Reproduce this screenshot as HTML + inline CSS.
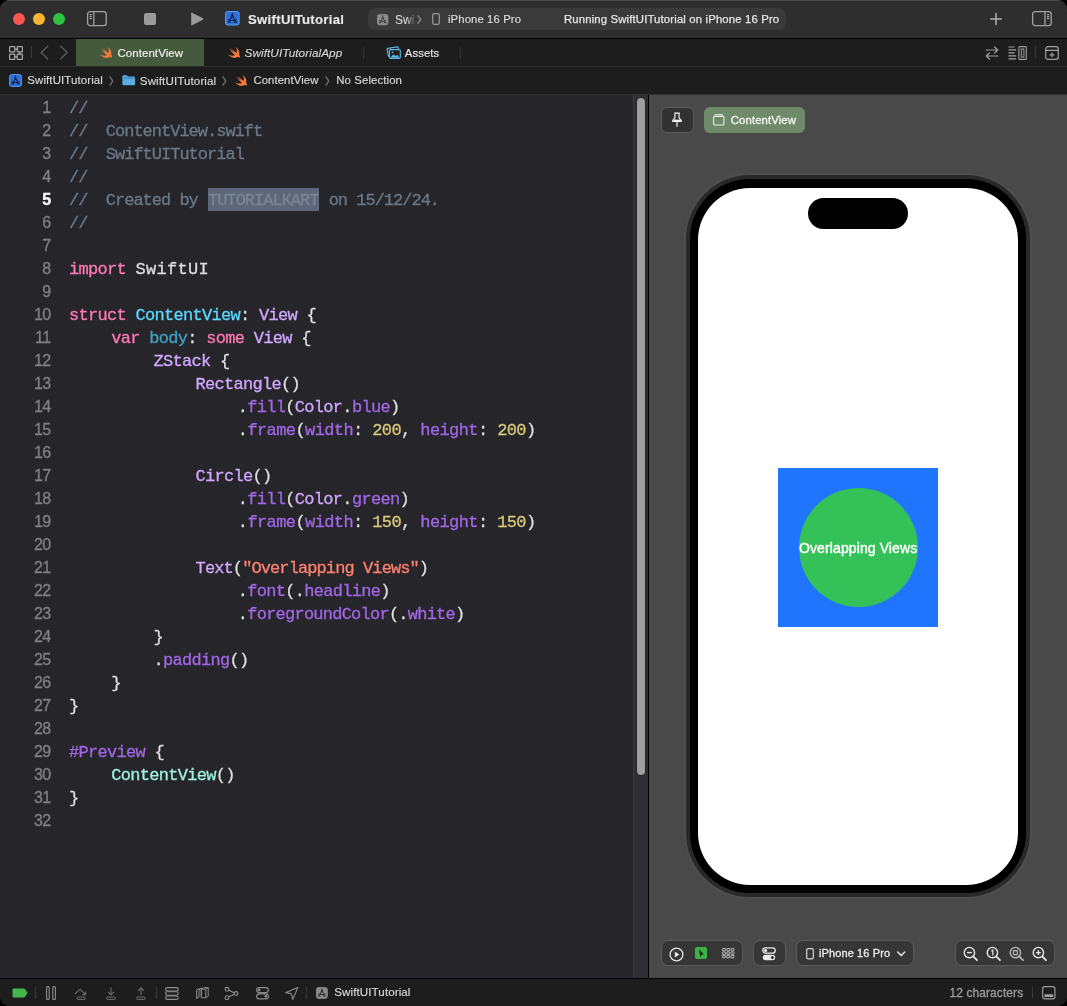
<!DOCTYPE html>
<html><head><meta charset="utf-8"><title>Xcode</title>
<style>
*{box-sizing:border-box}
html,body{margin:0;padding:0}
body{width:1067px;height:1006px;background:#000;overflow:hidden;position:relative;font-family:"Liberation Sans",sans-serif}
.a{position:absolute}
#win{position:absolute;left:0;top:0;width:1067px;height:1006px;border-radius:9.5px;overflow:hidden;background:#1d1d1d;will-change:transform}
.t{position:absolute;white-space:nowrap;line-height:1;-webkit-text-stroke:0.15px currentColor}
svg{position:absolute;overflow:visible}
.ln{position:absolute;left:0;width:51px;text-align:right;font-family:"Liberation Sans",sans-serif;font-size:16px;color:#808084;height:23px;line-height:23px;letter-spacing:-0.6px;-webkit-text-stroke:0.3px currentColor;padding-right:0.5px}
.cur{color:#fff;font-weight:bold}
.cl{position:absolute;height:23px;line-height:23px;font-family:"Liberation Mono",monospace;font-size:17px;letter-spacing:-0.7px;color:#dfdfe0;white-space:pre;-webkit-text-stroke:0.3px currentColor}
.k{color:#ff7ab2}
.c{color:#6c7986;letter-spacing:-1.0px}
.td{color:#5dd8ff}
.od{color:#41a1c0}
.ty{color:#d0a8ff}
.fn{color:#a167e6}
.nu{color:#d9c97c}
.st{color:#ff8170}
.pj{color:#9ef1dd}
.sel{background:#5d6779;display:inline-block;height:22px;line-height:23px;vertical-align:top;box-shadow:0 -1px 0 #5d6779;margin-left:1px;padding-right:1px;color:#7a8593}
</style></head>
<body>
<div id="win">
<div class="a" style="left:0px;top:0px;width:1067px;height:38px;background:#2e2e2e;"></div>
<div class="a" style="left:0px;top:0px;width:1067px;height:1px;background:#4a4a4a;"></div>
<div class="a" style="left:0px;top:38px;width:1067px;height:1px;background:#000;"></div>
<div class="a" style="left:0px;top:39px;width:1067px;height:27px;background:#1d1d1d;"></div>
<div class="a" style="left:0px;top:66px;width:1067px;height:1px;background:#2e2e2e;"></div>
<div class="a" style="left:0px;top:67px;width:1067px;height:27px;background:#1d1d1d;"></div>
<div class="a" style="left:0px;top:94px;width:1067px;height:1px;background:#333333;"></div>
<div class="a" style="left:12.8px;top:12.7px;width:12.4px;height:12.4px;border-radius:50%;background:#fb5650"></div>
<div class="a" style="left:32.8px;top:12.7px;width:12.4px;height:12.4px;border-radius:50%;background:#fdb42f"></div>
<div class="a" style="left:52.8px;top:12.7px;width:12.4px;height:12.4px;border-radius:50%;background:#2bc33f"></div>
<svg style="left:86px;top:10px;" width="22" height="17" viewBox="0 0 22 17"><rect x="1.6" y="1.6" width="18.6" height="14" rx="2.6" fill="none" stroke="#a2a2a2" stroke-width="1.3"/><line x1="7.8" y1="1.6" x2="7.8" y2="15.6" stroke="#a2a2a2" stroke-width="1.3"/><path d="M3.6 4.6 H5.8 M3.6 6.6 H5.8 M3.6 8.6 H5.8" stroke="#a2a2a2" stroke-width="1.1"/></svg>
<div class="a" style="left:144px;top:13px;width:12px;height:12px;background:#9b9b9b;border-radius:2px"></div>
<svg style="left:190px;top:12px;" width="14" height="14" viewBox="0 0 14 14"><path d="M1.2 1.2 Q1 0.2 2 0.7 L13 6.3 Q13.8 7 13 7.7 L2 13.3 Q1 13.8 1.2 12.8 Z" fill="#9b9b9b"/></svg>
<svg style="left:225px;top:11.2px;" width="14.6" height="14.6" viewBox="0 0 14 14"><rect x="0.5" y="0.5" width="13" height="13" rx="2.6" fill="#2f6fd8" stroke="#5b95f0" stroke-width="1"/><path d="M7 2.3 V4.4 M7 4.2 L3.9 10.4 M7 4.2 L10.1 10.4 M3.2 8.4 Q7 9.8 10.8 8.4 M3 10.6 H4.8 M9.2 10.6 H11" stroke="#10213f" stroke-width="1.15" fill="none" stroke-linecap="round"/><circle cx="7" cy="4.4" r="1.1" fill="#10213f"/></svg>
<div class="t" style="left:248.0px;top:12.6px;font-size:13.15px;letter-spacing:0.30px;color:#e8e8e8;font-weight:bold;font-style:normal;">SwiftUITutorial</div>
<div class="a" style="left:368px;top:8px;width:418px;height:22px;background:#3a3a3a;border-radius:7px"></div>
<svg style="left:377px;top:13.5px;" width="11.4" height="11.4" viewBox="0 0 14 14"><rect x="0.5" y="0.5" width="13" height="13" rx="2.6" fill="#8b8b8b" stroke="#8b8b8b" stroke-width="1"/><path d="M7 2.3 V4.4 M7 4.2 L3.9 10.4 M7 4.2 L10.1 10.4 M3.2 8.4 Q7 9.8 10.8 8.4 M3 10.6 H4.8 M9.2 10.6 H11" stroke="#3a3a3a" stroke-width="1.15" fill="none" stroke-linecap="round"/><circle cx="7" cy="4.4" r="1.1" fill="#3a3a3a"/></svg>
<div class="t" style="left:395px;top:13.5px;font-size:12px;color:#d6d6d6;-webkit-mask-image:linear-gradient(90deg,#000 60%,transparent 110%)">Swi</div>
<svg style="left:416.5px;top:14.5px;" width="5" height="9" viewBox="0 0 5 9"><path d="M1 0.8 L3.8 4.5 L1 8.2" stroke="#8a8a8a" stroke-width="1.4" fill="none" stroke-linecap="round"/></svg>
<svg style="left:431.5px;top:13.3px;" width="8" height="12" viewBox="0 0 8 12"><rect x="0.7" y="0.7" width="6.6" height="10.6" rx="1.5" fill="none" stroke="#9a9a9a" stroke-width="1.2"/></svg>
<div class="t" style="left:448.0px;top:13.8px;font-size:11.34px;letter-spacing:0.10px;color:#dedede;font-weight:normal;font-style:normal;">iPhone 16 Pro</div>
<div class="t" style="left:564.0px;top:13.8px;font-size:11.34px;letter-spacing:0.15px;color:#e6e6e6;font-weight:normal;font-style:normal;-webkit-text-stroke:0.25px #e6e6e6">Running SwiftUITutorial on iPhone 16 Pro</div>
<svg style="left:990px;top:13.3px;" width="12" height="12" viewBox="0 0 12 12"><path d="M6 0.6 V11.4 M0.6 6 H11.4" stroke="#b0b0b0" stroke-width="1.5" stroke-linecap="round"/></svg>
<svg style="left:1031px;top:10px;" width="22" height="17" viewBox="0 0 22 17"><rect x="1.6" y="1.6" width="18.6" height="14" rx="2.6" fill="none" stroke="#a2a2a2" stroke-width="1.3"/><line x1="14" y1="1.6" x2="14" y2="15.6" stroke="#a2a2a2" stroke-width="1.3"/><path d="M16 4.6 H18.2 M16 6.6 H18.2 M16 8.6 H18.2" stroke="#a2a2a2" stroke-width="1.1"/></svg>
<svg style="left:8.5px;top:45.5px;" width="14" height="14" viewBox="0 0 14 14"><g fill="none" stroke="#a9a9a9" stroke-width="1.2"><rect x="0.6" y="0.6" width="5.2" height="5.2" rx="0.6"/><rect x="8.2" y="0.6" width="5.2" height="5.2" rx="0.6"/><rect x="0.6" y="8.2" width="5.2" height="5.2" rx="0.6"/><rect x="8.2" y="8.2" width="5.2" height="5.2" rx="0.6"/><path d="M5.8 3.2 H9.4 M10.8 5.8 V9.2 M8.2 10.8 H4.8"/></g></svg>
<div class="a" style="left:31px;top:46px;width:1px;height:12px;background:#3a3a3a;"></div>
<svg style="left:39.5px;top:45px;" width="10" height="15" viewBox="0 0 10 15"><path d="M8.2 0.8 L1.2 7.5 L8.2 14.2" stroke="#5c5c5c" stroke-width="1.3" fill="none"/></svg>
<svg style="left:58.8px;top:45px;" width="10" height="15" viewBox="0 0 10 15"><path d="M1.2 0.8 L8.2 7.5 L1.2 14.2" stroke="#5c5c5c" stroke-width="1.3" fill="none"/></svg>
<div class="a" style="left:76px;top:39px;width:128px;height:27px;background:#455a3d;"></div>
<svg style="left:99.9px;top:46.9px;overflow:visible" width="12.199999999999989" height="11.100000000000001" viewBox="2.411 3.409 18.116999999999997 16.213"><path fill="#f5793a" d="M13.543 3.41c4.114 2.47 6.545 7.162 5.549 11.131-.024.093-.05.181-.076.272l.002.001c2.062 2.538 1.5 5.258 1.236 4.745-1.072-2.086-3.066-1.568-4.088-1.043a6.803 6.803 0 0 1-.281.158l-.02.012-.002.002c-2.115 1.123-4.957 1.205-7.812-.022a12.568 12.568 0 0 1-5.64-4.838c.649.48 1.35.902 2.097 1.252 3.019 1.414 6.051 1.311 8.197-.002C9.651 12.73 7.101 9.67 5.146 7.191a10.628 10.628 0 0 1-1.005-1.384c2.34 2.142 6.038 4.83 7.365 5.576C8.69 8.408 6.208 4.743 6.324 4.86c4.436 4.47 8.528 6.996 8.528 6.996.154.085.27.154.36.213.085-.215.16-.437.224-.668.708-2.588-.09-5.548-1.893-7.992z"/></svg>
<div class="t" style="left:117.4px;top:47.8px;font-size:11.45px;letter-spacing:0.10px;color:#f2f2f2;font-weight:normal;font-style:normal;">ContentView</div>
<svg style="left:228.3px;top:46.9px;overflow:visible" width="12.199999999999989" height="11.100000000000001" viewBox="2.411 3.409 18.116999999999997 16.213"><path fill="#f5793a" d="M13.543 3.41c4.114 2.47 6.545 7.162 5.549 11.131-.024.093-.05.181-.076.272l.002.001c2.062 2.538 1.5 5.258 1.236 4.745-1.072-2.086-3.066-1.568-4.088-1.043a6.803 6.803 0 0 1-.281.158l-.02.012-.002.002c-2.115 1.123-4.957 1.205-7.812-.022a12.568 12.568 0 0 1-5.64-4.838c.649.48 1.35.902 2.097 1.252 3.019 1.414 6.051 1.311 8.197-.002C9.651 12.73 7.101 9.67 5.146 7.191a10.628 10.628 0 0 1-1.005-1.384c2.34 2.142 6.038 4.83 7.365 5.576C8.69 8.408 6.208 4.743 6.324 4.86c4.436 4.47 8.528 6.996 8.528 6.996.154.085.27.154.36.213.085-.215.16-.437.224-.668.708-2.588-.09-5.548-1.893-7.992z"/></svg>
<div class="t" style="left:244.5px;top:47.7px;font-size:11.82px;letter-spacing:0.05px;color:#d4d4d4;font-weight:normal;font-style:italic;">SwiftUITutorialApp</div>
<div class="a" style="left:363px;top:47px;width:1px;height:12px;background:#343434;"></div>
<svg style="left:385.5px;top:46.2px;" width="15" height="13" viewBox="0 0 16 14"><path d="M2.6 11.5 L1.2 3.8 Q1 2.8 2 2.6 L11.8 0.9 Q12.8 0.8 13 1.8 L13.3 3.3" fill="none" stroke="#5bb3e6" stroke-width="1.3"/><rect x="3.7" y="3.9" width="11.6" height="9.4" rx="1.2" fill="none" stroke="#5bb3e6" stroke-width="1.3"/><path d="M4.4 12.6 L8 9 L10.3 10.8 L12 9.3 L14.6 12.6 Z" fill="#5bb3e6"/><circle cx="7" cy="6.8" r="1" fill="#5bb3e6"/></svg>
<div class="t" style="left:404.8px;top:47.9px;font-size:11.3px;letter-spacing:0.10px;color:#e8e8e8;font-weight:normal;font-style:normal;">Assets</div>
<div class="a" style="left:460px;top:47px;width:1px;height:12px;background:#343434;"></div>
<svg style="left:984.5px;top:45.5px;" width="14" height="14" viewBox="0 0 14 14"><path d="M1 4 H12.6 M9.6 1 L12.8 4 L9.6 7 M13 10 H1.4 M4.4 7 L1.2 10 L4.4 13" stroke="#a0a0a0" stroke-width="1.2" fill="none" stroke-linecap="round" stroke-linejoin="round"/></svg>
<svg style="left:1007.5px;top:45.5px;" width="19" height="14" viewBox="0 0 19 14"><path d="M0.5 1 H6.5 M0.5 3.9 H8.2 M0.5 6.9 H6.5 M0.5 9.9 H8.2 M0.5 12.9 H8.2" stroke="#a0a0a0" stroke-width="1.1"/><rect x="10.9" y="0.6" width="7.4" height="12.8" rx="0.6" fill="none" stroke="#a0a0a0" stroke-width="1.1"/><rect x="13.3" y="3" width="2.6" height="8" fill="none" stroke="#a0a0a0" stroke-width="1"/></svg>
<div class="a" style="left:1035px;top:46px;width:1px;height:12px;background:#3a3a3a;"></div>
<svg style="left:1044.5px;top:45.5px;" width="14" height="14" viewBox="0 0 14 14"><rect x="0.7" y="0.7" width="12.6" height="12.6" rx="2.4" fill="none" stroke="#a0a0a0" stroke-width="1.2"/><path d="M0.7 4.4 H13.3 M7 6.4 V11.2 M4.6 8.8 H9.4" stroke="#a0a0a0" stroke-width="1.2"/></svg>
<svg style="left:9px;top:73.8px;" width="13" height="13" viewBox="0 0 14 14"><rect x="0.5" y="0.5" width="13" height="13" rx="2.6" fill="#2f6fd8" stroke="#5b95f0" stroke-width="1"/><path d="M7 2.3 V4.4 M7 4.2 L3.9 10.4 M7 4.2 L10.1 10.4 M3.2 8.4 Q7 9.8 10.8 8.4 M3 10.6 H4.8 M9.2 10.6 H11" stroke="#10213f" stroke-width="1.15" fill="none" stroke-linecap="round"/><circle cx="7" cy="4.4" r="1.1" fill="#10213f"/></svg>
<div class="t" style="left:27.3px;top:75.0px;font-size:11.48px;letter-spacing:0.10px;color:#d9d9d9;font-weight:normal;font-style:normal;">SwiftUITutorial</div>
<svg style="left:108.5px;top:75.8px;" width="5" height="10" viewBox="0 0 5 10"><path d="M1 0.8 L3.8 5.0 L1 9.2" stroke="#6c6c6c" stroke-width="1.4" fill="none" stroke-linecap="round"/></svg>
<svg style="left:121.5px;top:75px;" width="13.5" height="10.5" viewBox="0 0 13.5 10.5"><path d="M0.4 1.4 Q0.4 0.3 1.5 0.3 H4.6 L6 1.6 H12 Q13.1 1.6 13.1 2.7 V9.2 Q13.1 10.3 12 10.3 H1.5 Q0.4 10.3 0.4 9.2 Z" fill="#5aaee4"/><path d="M0.4 3 H13.1" stroke="#2c6b95" stroke-width="0.7"/></svg>
<div class="t" style="left:139.8px;top:75.0px;font-size:11.6px;letter-spacing:0.10px;color:#d9d9d9;font-weight:normal;font-style:normal;">SwiftUITutorial</div>
<svg style="left:222px;top:75.8px;" width="5" height="10" viewBox="0 0 5 10"><path d="M1 0.8 L3.8 5.0 L1 9.2" stroke="#6c6c6c" stroke-width="1.4" fill="none" stroke-linecap="round"/></svg>
<svg style="left:235.3px;top:74.6px;overflow:visible" width="12.199999999999989" height="11.0" viewBox="2.411 3.409 18.116999999999997 16.213"><path fill="#f5793a" d="M13.543 3.41c4.114 2.47 6.545 7.162 5.549 11.131-.024.093-.05.181-.076.272l.002.001c2.062 2.538 1.5 5.258 1.236 4.745-1.072-2.086-3.066-1.568-4.088-1.043a6.803 6.803 0 0 1-.281.158l-.02.012-.002.002c-2.115 1.123-4.957 1.205-7.812-.022a12.568 12.568 0 0 1-5.64-4.838c.649.48 1.35.902 2.097 1.252 3.019 1.414 6.051 1.311 8.197-.002C9.651 12.73 7.101 9.67 5.146 7.191a10.628 10.628 0 0 1-1.005-1.384c2.34 2.142 6.038 4.83 7.365 5.576C8.69 8.408 6.208 4.743 6.324 4.86c4.436 4.47 8.528 6.996 8.528 6.996.154.085.27.154.36.213.085-.215.16-.437.224-.668.708-2.588-.09-5.548-1.893-7.992z"/></svg>
<div class="t" style="left:253.4px;top:75.1px;font-size:11.34px;letter-spacing:0.10px;color:#d9d9d9;font-weight:normal;font-style:normal;">ContentView</div>
<svg style="left:324.5px;top:75.8px;" width="5" height="10" viewBox="0 0 5 10"><path d="M1 0.8 L3.8 5.0 L1 9.2" stroke="#6c6c6c" stroke-width="1.4" fill="none" stroke-linecap="round"/></svg>
<div class="t" style="left:336.3px;top:75.1px;font-size:11.38px;letter-spacing:0.10px;color:#d9d9d9;font-weight:normal;font-style:normal;">No Selection</div>
<div class="a" style="left:0px;top:95px;width:633px;height:883px;background:#25252a;"></div>
<div class="ln" style="top:95.5px">1</div>
<div class="cl" style="top:97.0px;left:69.0px"><span class="c">//</span></div>
<div class="ln" style="top:118.5px">2</div>
<div class="cl" style="top:120.0px;left:69.0px"><span class="c">//  ContentView.swift</span></div>
<div class="ln" style="top:141.5px">3</div>
<div class="cl" style="top:143.0px;left:69.0px"><span class="c">//  SwiftUITutorial</span></div>
<div class="ln" style="top:164.5px">4</div>
<div class="cl" style="top:166.0px;left:69.0px"><span class="c">//</span></div>
<div class="ln cur" style="top:187.5px">5</div>
<div class="cl" style="top:189.0px;left:69.0px"><span class="c">//  Created by <span class="sel">TUTORIALKART</span> on 15/12/24.</span></div>
<div class="ln" style="top:210.5px">6</div>
<div class="cl" style="top:212.0px;left:69.0px"><span class="c">//</span></div>
<div class="ln" style="top:233.5px">7</div>
<div class="ln" style="top:256.5px">8</div>
<div class="cl" style="top:258.0px;left:69.0px;letter-spacing:-0.7px"><span class="k">import</span> <span style="letter-spacing:0.3px">SwiftUI</span></div>
<div class="ln" style="top:279.5px">9</div>
<div class="ln" style="top:302.5px">10</div>
<div class="cl" style="top:304.0px;left:69.0px"><span class="k">struct</span> <span class="td">ContentView</span>: <span class="ty">View</span> {</div>
<div class="ln" style="top:325.5px">11</div>
<div class="cl" style="top:327.0px;left:111.2px"><span class="k">var</span> <span class="od">body</span>: <span class="k">some</span> <span class="ty">View</span> {</div>
<div class="ln" style="top:348.5px">12</div>
<div class="cl" style="top:350.0px;left:153.4px"><span class="ty">ZStack</span> {</div>
<div class="ln" style="top:371.5px">13</div>
<div class="cl" style="top:373.0px;left:195.6px"><span class="ty">Rectangle</span>()</div>
<div class="ln" style="top:394.5px">14</div>
<div class="cl" style="top:396.0px;left:237.8px">.<span class="fn">fill</span>(<span class="ty">Color</span>.<span class="fn">blue</span>)</div>
<div class="ln" style="top:417.5px">15</div>
<div class="cl" style="top:419.0px;left:237.8px;letter-spacing:-0.6px">.<span class="fn">frame</span>(<span class="fn">width</span>: <span class="nu">200</span>, <span class="fn">height</span>: <span class="nu">200</span>)</div>
<div class="ln" style="top:440.5px">16</div>
<div class="ln" style="top:463.5px">17</div>
<div class="cl" style="top:465.0px;left:195.6px"><span class="ty">Circle</span>()</div>
<div class="ln" style="top:486.5px">18</div>
<div class="cl" style="top:488.0px;left:237.8px">.<span class="fn">fill</span>(<span class="ty">Color</span>.<span class="fn">green</span>)</div>
<div class="ln" style="top:509.5px">19</div>
<div class="cl" style="top:511.0px;left:237.8px;letter-spacing:-0.6px">.<span class="fn">frame</span>(<span class="fn">width</span>: <span class="nu">150</span>, <span class="fn">height</span>: <span class="nu">150</span>)</div>
<div class="ln" style="top:532.5px">20</div>
<div class="ln" style="top:555.5px">21</div>
<div class="cl" style="top:557.0px;left:195.6px;letter-spacing:-0.9px"><span class="ty">Text</span>(<span class="st">"Overlapping Views"</span>)</div>
<div class="ln" style="top:578.5px">22</div>
<div class="cl" style="top:580.0px;left:237.8px">.<span class="fn">font</span>(.<span class="fn">headline</span>)</div>
<div class="ln" style="top:601.5px">23</div>
<div class="cl" style="top:603.0px;left:237.8px;letter-spacing:-0.76px">.<span class="fn">foregroundColor</span>(.<span class="fn">white</span>)</div>
<div class="ln" style="top:624.5px">24</div>
<div class="cl" style="top:626.0px;left:153.4px">}</div>
<div class="ln" style="top:647.5px">25</div>
<div class="cl" style="top:649.0px;left:153.4px">.<span class="fn">padding</span>()</div>
<div class="ln" style="top:670.5px">26</div>
<div class="cl" style="top:672.0px;left:111.2px">}</div>
<div class="ln" style="top:693.5px">27</div>
<div class="cl" style="top:695.0px;left:69.0px">}</div>
<div class="ln" style="top:716.5px">28</div>
<div class="ln" style="top:739.5px">29</div>
<div class="cl" style="top:741.0px;left:69.0px"><span class="fn">#Preview</span> {</div>
<div class="ln" style="top:762.5px">30</div>
<div class="cl" style="top:764.0px;left:111.2px"><span class="pj">ContentView</span>()</div>
<div class="ln" style="top:785.5px">31</div>
<div class="cl" style="top:787.0px;left:69.0px">}</div>
<div class="ln" style="top:808.5px">32</div>
<div class="a" style="left:633px;top:95px;width:1px;height:883px;background:#3a3a3f;"></div>
<div class="a" style="left:634px;top:95px;width:14px;height:883px;background:#2e2e33;"></div>
<div class="a" style="left:637px;top:98px;width:8px;height:677px;background:#9e9e9e;border-radius:4px;box-shadow:0 0 0 0.5px rgba(0,0,0,.35)"></div>
<div class="a" style="left:648px;top:95px;width:1px;height:883px;background:#000;"></div>
<div class="a" style="left:649px;top:95px;width:418px;height:883px;background:#494949;"></div>
<div class="a" style="left:661px;top:107px;width:33px;height:26px;background:#323232;border-radius:6px;border:1px solid #5a5a5a"></div>
<svg style="left:671px;top:112px;" width="12" height="16" viewBox="0 0 12 16"><path d="M3.2 1.2 H8.8 M4 1.2 V5 Q4 6.2 2.4 7.6 Q1.4 8.6 1.6 9.4 H10.4 Q10.6 8.6 9.6 7.6 Q8 6.2 8 5 V1.2" fill="none" stroke="#f0f0f0" stroke-width="1.2" stroke-linejoin="round"/><path d="M2.3 8.4 H9.7" stroke="#f0f0f0" stroke-width="1.6"/><path d="M6 9.6 V14.8" stroke="#f0f0f0" stroke-width="1.2"/></svg>
<div class="a" style="left:704px;top:107px;width:101px;height:26px;background:#6e8a68;border-radius:6px"></div>
<svg style="left:712.5px;top:113px;" width="11.5" height="12.5" viewBox="0 0 12 13"><rect x="0.6" y="3.6" width="10.8" height="8.8" rx="1" fill="none" stroke="#eef2ec" stroke-width="1.1"/><path d="M1.8 1.6 H10.2" stroke="#eef2ec" stroke-width="1.1" opacity=".8"/><path d="M1 3.4 H11" stroke="#eef2ec" stroke-width="1.4"/></svg>
<div class="t" style="left:730.8px;top:114.8px;font-size:11.34px;letter-spacing:0.10px;color:#f6f8f5;font-weight:normal;font-style:normal;-webkit-text-stroke:0.3px #f6f8f5">ContentView</div>
<div class="a" style="left:684.2px;top:173.3px;width:347.8px;height:725.5px;border-radius:66px;background:#4e4e4e"></div>
<div class="a" style="left:686px;top:175px;width:344px;height:722px;border-radius:64px;background:#292929"></div>
<div class="a" style="left:690px;top:179.3px;width:335.6px;height:713.3px;border-radius:60px;background:#000"></div>
<div class="a" style="left:698px;top:187.5px;width:320px;height:697.5px;border-radius:52px;background:#fff"></div>
<div class="a" style="left:808px;top:198px;width:100px;height:31px;border-radius:15.5px;background:#000"></div>
<div class="a" style="left:778.3px;top:467.9px;width:159.4px;height:159.4px;background:#1f75fe;"></div>
<div class="a" style="left:798.5px;top:487.7px;width:119.5px;height:119.5px;border-radius:50%;background:#34c158"></div>
<div class="t" style="left:799.0px;top:541.3px;font-size:14.02px;letter-spacing:0.10px;color:#ffffff;font-weight:normal;font-style:normal;-webkit-text-stroke:0.4px #fff">Overlapping Views</div>
<div class="a" style="left:661.3px;top:940px;width:81.70000000000005px;height:26px;background:#363636;border-radius:7px;border:1px solid #5c5c5c"></div>
<svg style="left:669px;top:946.5px;" width="15" height="15" viewBox="0 0 15 15"><circle cx="7.5" cy="7.5" r="6.4" fill="none" stroke="#e8e8e8" stroke-width="1.3"/><path d="M5.8 4.6 L10.4 7.5 L5.8 10.4 Z" fill="#e8e8e8"/></svg>
<div class="a" style="left:695px;top:947.2px;width:12px;height:12px;background:#3eb049;border-radius:2px"></div>
<svg style="left:697.5px;top:949px;" width="7" height="9" viewBox="0 0 7 9"><path d="M1 0.6 L6.2 5.6 L3.8 5.6 L2.4 8.4 Z" fill="#0f2c11"/></svg>
<svg style="left:722px;top:948px;" width="12.5" height="10.5" viewBox="0 0 12.5 10.5"><rect x="0.45" y="0.45" width="2.9" height="2.4" rx="0.4" fill="none" stroke="#d0d0d0" stroke-width="0.85"/><rect x="4.75" y="0.45" width="2.9" height="2.4" rx="0.4" fill="none" stroke="#d0d0d0" stroke-width="0.85"/><rect x="9.049999999999999" y="0.45" width="2.9" height="2.4" rx="0.4" fill="none" stroke="#d0d0d0" stroke-width="0.85"/><rect x="0.45" y="3.95" width="2.9" height="2.4" rx="0.4" fill="none" stroke="#d0d0d0" stroke-width="0.85"/><rect x="4.75" y="3.95" width="2.9" height="2.4" rx="0.4" fill="none" stroke="#d0d0d0" stroke-width="0.85"/><rect x="9.049999999999999" y="3.95" width="2.9" height="2.4" rx="0.4" fill="none" stroke="#d0d0d0" stroke-width="0.85"/><rect x="0.45" y="7.45" width="2.9" height="2.4" rx="0.4" fill="none" stroke="#d0d0d0" stroke-width="0.85"/><rect x="4.75" y="7.45" width="2.9" height="2.4" rx="0.4" fill="none" stroke="#d0d0d0" stroke-width="0.85"/><rect x="9.049999999999999" y="7.45" width="2.9" height="2.4" rx="0.4" fill="none" stroke="#d0d0d0" stroke-width="0.85"/></svg>
<div class="a" style="left:753px;top:940px;width:33px;height:26px;background:#363636;border-radius:7px;border:1px solid #5c5c5c"></div>
<svg style="left:762px;top:946.5px;" width="14" height="14" viewBox="0 0 14 14"><rect x="0.8" y="0.8" width="12.4" height="5.4" rx="2.7" fill="none" stroke="#eaeaea" stroke-width="1.3"/><circle cx="3.6" cy="3.5" r="1.6" fill="#eaeaea"/><rect x="0.8" y="7.8" width="12.4" height="5.4" rx="2.7" fill="#eaeaea"/><circle cx="10.4" cy="10.5" r="1.6" fill="#343434"/></svg>
<div class="a" style="left:796.2px;top:940px;width:117.39999999999998px;height:26px;background:#363636;border-radius:7px;border:1px solid #5c5c5c"></div>
<svg style="left:805.5px;top:947.5px;" width="8" height="11.5" viewBox="0 0 8 11.5"><rect x="0.7" y="0.7" width="6.6" height="10.1" rx="1.4" fill="none" stroke="#d8d8d8" stroke-width="1.2"/></svg>
<div class="t" style="left:819.0px;top:948.2px;font-size:11.04px;letter-spacing:0.10px;color:#ececec;font-weight:normal;font-style:normal;-webkit-text-stroke:0.3px #ececec">iPhone 16 Pro</div>
<svg style="left:896.5px;top:950.5px;" width="8.5" height="6" viewBox="0 0 8.5 6"><path d="M0.8 1 L4.25 4.6 L7.7 1" stroke="#e4e4e4" stroke-width="1.5" fill="none" stroke-linecap="round" stroke-linejoin="round"/></svg>
<div class="a" style="left:955.3px;top:940px;width:99.70000000000005px;height:26px;background:#363636;border-radius:7px;border:1px solid #5c5c5c"></div>
<svg style="left:962.5px;top:945.5px;" width="16" height="16" viewBox="0 0 16 16"><circle cx="6.4" cy="6.6" r="5.2" fill="none" stroke="#e6e6e6" stroke-width="1.4"/><path d="M10.2 10.4 L14 14.2" stroke="#e6e6e6" stroke-width="1.8" stroke-linecap="round"/><path d="M4 6.6 H8.8" stroke="#e6e6e6" stroke-width="1.4"/></svg>
<svg style="left:985.5px;top:945.5px;" width="16" height="16" viewBox="0 0 16 16"><circle cx="6.4" cy="6.6" r="5.2" fill="none" stroke="#e6e6e6" stroke-width="1.4"/><path d="M10.2 10.4 L14 14.2" stroke="#e6e6e6" stroke-width="1.8" stroke-linecap="round"/><path d="M5.4 5.2 L6.8 4 V9.4" stroke="#e6e6e6" stroke-width="1.2" fill="none"/></svg>
<svg style="left:1008.5px;top:945.5px;" width="16" height="16" viewBox="0 0 16 16"><circle cx="6.4" cy="6.6" r="5.2" fill="none" stroke="#b5b5b5" stroke-width="1.4"/><path d="M10.2 10.4 L14 14.2" stroke="#b5b5b5" stroke-width="1.8" stroke-linecap="round"/><rect x="4.4" y="4.6" width="4" height="4" rx="0.6" fill="none" stroke="#bdbdbd" stroke-width="1.1"/></svg>
<svg style="left:1031.5px;top:945.5px;" width="16" height="16" viewBox="0 0 16 16"><circle cx="6.4" cy="6.6" r="5.2" fill="none" stroke="#e6e6e6" stroke-width="1.4"/><path d="M10.2 10.4 L14 14.2" stroke="#e6e6e6" stroke-width="1.8" stroke-linecap="round"/><path d="M4 6.6 H8.8 M6.4 4.2 V9" stroke="#e6e6e6" stroke-width="1.4"/></svg>
<div class="a" style="left:0px;top:978px;width:1067px;height:1px;background:#000;"></div>
<div class="a" style="left:0px;top:979px;width:1067px;height:27px;background:#1d1d1d;"></div>
<div class="a" style="left:0;top:0.8px;width:1067px;height:1006px">
<svg style="left:11.5px;top:987.5px;" width="16" height="10" viewBox="0 0 16 10"><path d="M1.5 0.5 H11.6 Q12.3 0.5 12.8 1 L15.3 4.4 Q15.7 5 15.3 5.6 L12.8 9 Q12.3 9.5 11.6 9.5 H1.5 Q0.5 9.5 0.5 8.5 V1.5 Q0.5 0.5 1.5 0.5 Z" fill="#44b84b"/></svg>
<div class="a" style="left:34.5px;top:986px;width:1px;height:12px;background:#3a3a3a;"></div>
<svg style="left:45.5px;top:985.5px;" width="10" height="14" viewBox="0 0 10 14"><rect x="0.6" y="0.6" width="2.6" height="12.8" rx="1" fill="none" stroke="#8f8f8f" stroke-width="1.1"/><rect x="6.8" y="0.6" width="2.6" height="12.8" rx="1" fill="none" stroke="#8f8f8f" stroke-width="1.1"/></svg>
<svg style="left:73.5px;top:986px;" width="14" height="13" viewBox="0 0 14 13"><g opacity=".7"><path d="M1 7 L6 2.2 L11.6 7.6 M11.6 4.4 V7.6 H8.4" fill="none" stroke="#8f8f8f" stroke-width="1.1"/><rect x="3.2" y="10" width="8" height="2.4" rx="0.5" fill="none" stroke="#8f8f8f" stroke-width="1"/></g></svg>
<svg style="left:105.5px;top:986px;" width="10" height="13" viewBox="0 0 10 13"><g opacity=".7"><path d="M5 0.5 V7.6 M2 4.8 L5 7.8 L8 4.8" fill="none" stroke="#8f8f8f" stroke-width="1.1"/><rect x="0.8" y="10" width="8.4" height="2.4" rx="0.5" fill="none" stroke="#8f8f8f" stroke-width="1"/></g></svg>
<svg style="left:135.5px;top:986px;" width="10" height="13" viewBox="0 0 10 13"><g opacity=".7"><path d="M5 8 V0.9 M2 3.8 L5 0.8 L8 3.8" fill="none" stroke="#8f8f8f" stroke-width="1.1"/><rect x="0.8" y="10" width="8.4" height="2.4" rx="0.5" fill="none" stroke="#8f8f8f" stroke-width="1"/></g></svg>
<div class="a" style="left:156px;top:986px;width:1px;height:12px;background:#3a3a3a;"></div>
<svg style="left:164.5px;top:986.5px;" width="14" height="13" viewBox="0 0 14 13"><g fill="none" stroke="#8f8f8f" stroke-width="1.1"><rect x="0.6" y="0.6" width="12.6" height="3.4" rx="1.6"/><rect x="0.6" y="4.8" width="12.6" height="3.4" rx="1.6"/><rect x="0.6" y="9" width="12.6" height="3.4" rx="1.6"/></g></svg>
<svg style="left:195.5px;top:986.5px;" width="13" height="13" viewBox="0 0 13 13"><g fill="none" stroke="#8f8f8f" stroke-width="1"><path d="M0.6 3 L3 1.4 V10 L0.6 11.6 Z"/><path d="M2.8 2.6 L5.4 1 V9.6"/><path d="M5.2 2.2 L7.6 0.6 H12.2 V9.2 L9.8 10.8 H5.2 Z"/><path d="M5.2 2.2 H9.8 V10.8 M9.8 2.2 L12.2 0.6"/></g></svg>
<svg style="left:224px;top:986px;" width="15" height="13" viewBox="0 0 15 13"><g fill="none" stroke="#8f8f8f" stroke-width="1.1"><circle cx="3" cy="2.3" r="1.9"/><circle cx="12" cy="6.5" r="1.9"/><circle cx="3" cy="10.7" r="1.9"/><path d="M4.7 3.2 L10.2 5.7 M4.7 9.8 L10.2 7.3"/></g></svg>
<svg style="left:255.5px;top:986.5px;" width="13" height="12.5" viewBox="0 0 13 12.5"><g fill="none" stroke="#8f8f8f" stroke-width="1.1"><rect x="0.6" y="0.6" width="11.8" height="5" rx="2.5"/><rect x="0.6" y="6.9" width="11.8" height="5" rx="2.5"/></g><circle cx="3.2" cy="3.1" r="1.3" fill="#8f8f8f"/><circle cx="9.8" cy="9.4" r="1.3" fill="#8f8f8f"/></svg>
<svg style="left:285px;top:986px;" width="13.5" height="13" viewBox="0 0 13.5 13"><path d="M12.8 0.6 L0.8 5.6 L6.4 6.8 L7.8 12.4 Z" fill="none" stroke="#8f8f8f" stroke-width="1.1" stroke-linejoin="round"/></svg>
<div class="a" style="left:306px;top:986px;width:1px;height:12px;background:#3a3a3a;"></div>
<svg style="left:315.8px;top:986.2px;" width="11.8" height="11.8" viewBox="0 0 14 14"><rect x="0.5" y="0.5" width="13" height="13" rx="2.6" fill="#8a8a8a" stroke="#8a8a8a" stroke-width="1"/><path d="M7 2.3 V4.4 M7 4.2 L3.9 10.4 M7 4.2 L10.1 10.4 M3.2 8.4 Q7 9.8 10.8 8.4 M3 10.6 H4.8 M9.2 10.6 H11" stroke="#2a2a2a" stroke-width="1.15" fill="none" stroke-linecap="round"/><circle cx="7" cy="4.4" r="1.1" fill="#2a2a2a"/></svg>
<div class="t" style="left:334.3px;top:986.0px;font-size:11.57px;letter-spacing:0.10px;color:#dadada;font-weight:normal;font-style:normal;">SwiftUITutorial</div>
<div class="t" style="left:949.6px;top:987.6px;font-size:11.95px;letter-spacing:0.10px;color:#9c9c9c;font-weight:normal;font-style:normal;-webkit-text-stroke:0.3px #9c9c9c">12 characters</div>
<div class="a" style="left:1032px;top:986.5px;width:1px;height:11px;background:#3a3a3a;"></div>
<svg style="left:1041.6px;top:985.6px;" width="13.6" height="13.6" viewBox="0 0 14 14"><rect x="0.7" y="0.7" width="12.6" height="12.6" rx="2.2" fill="none" stroke="#9c9c9c" stroke-width="1.2"/><rect x="2.4" y="8.6" width="9.2" height="2.8" rx="0.6" fill="#9c9c9c"/></svg>
</div>
</div>
</body></html>
